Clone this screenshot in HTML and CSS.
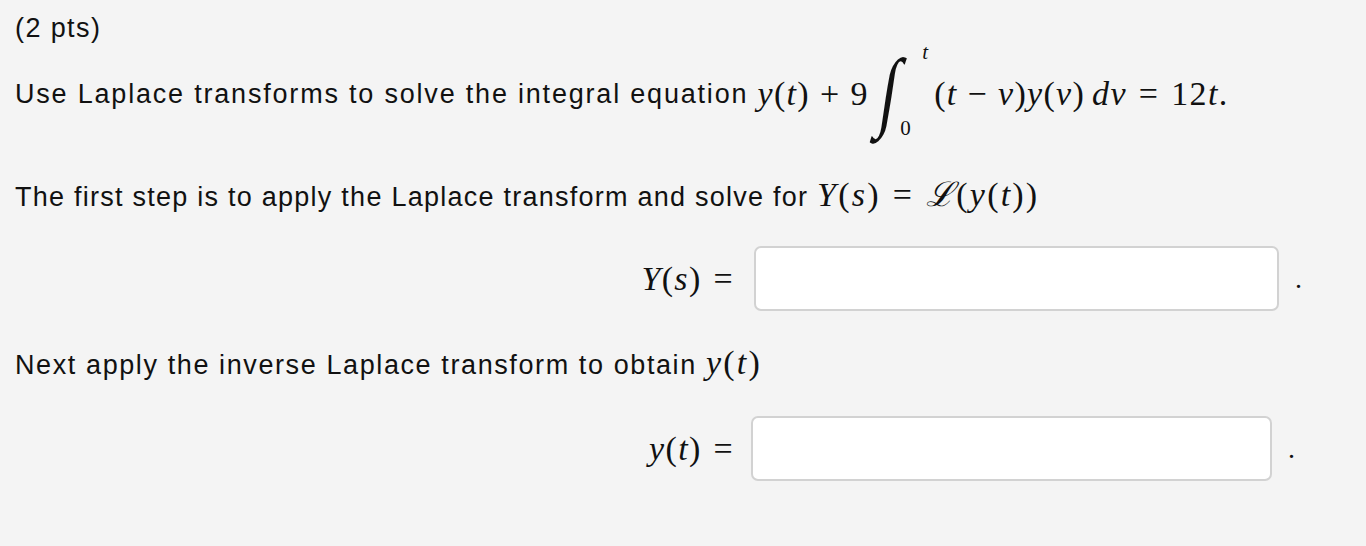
FILE: index.html
```html
<!DOCTYPE html>
<html>
<head>
<meta charset="utf-8">
<link rel="stylesheet" href="styles.css">
</head>
<body>
<div class="page">
  <p class="pts">(2 pts)</p>
  <p class="q1"><span class="txt">Use Laplace transforms to solve the integral equation </span><span class="m"><i>y</i>(<i>t</i>)<span class="op">+</span>9</span><span class="integral"><span class="isign">∫</span><span class="lims"><span class="up"><i>t</i></span><span class="lo">0</span></span></span><span class="m">(<i>t</i><span class="op">−</span><i>v</i>)<i>y</i>(<i>v</i>)<span class="sp"></span><i>dv</i><span class="rel">=</span>12<i>t</i>.</span></p>
  <p class="q2"><span class="txt">The first step is to apply the Laplace transform and solve for </span><span class="m wide"><i>Y</i>(<i>s</i>)<span class="rel">=</span><span class="cal">ℒ</span>(<i>y</i>(<i>t</i>))</span></p>
  <div class="row r1">
    <div class="lab m"><i>Y</i>(<i>s</i>)<span class="rel">=</span></div>
    <div class="box b1"></div>
    <span class="dot">.</span>
  </div>
  <p class="q3"><span class="txt">Next apply the inverse Laplace transform to obtain </span><span class="m wide"><i>y</i>(<i>t</i>)</span></p>
  <div class="row r2">
    <div class="lab m"><i>y</i>(<i>t</i>)<span class="rel">=</span></div>
    <div class="box b2"></div>
    <span class="dot">.</span>
  </div>
</div>
</body>
</html>
```
FILE: styles.css
```css
html, body {
  margin: 0;
  padding: 0;
  background: #f4f4f4;
}
body {
  font-family: "Liberation Sans", Arial, sans-serif;
  font-size: 27px;
  letter-spacing: 1.4px;
  color: #111;
}
.page {
  padding: 10px 0 0 15px;
}
p { margin: 0; }
.pts { line-height: 36px; height: 36px; }
.q1 {
  margin-top: 3px;
  height: 90px;
  display: flex;
  align-items: center;
  white-space: pre;
}
.q1 .txt { letter-spacing: 1.8px; }
.q2 .txt { letter-spacing: 1.25px; }
.q3 .txt { letter-spacing: 1.6px; }
.m {
  font-family: "Liberation Serif", "Times New Roman", serif;
  font-size: 34px;
  letter-spacing: 1.3px;
}
.m.wide { letter-spacing: 2.2px; }
.m i { font-style: italic; }
.op { margin: 0 10px; }
.rel { margin: 0 12px; }
.lab .rel { margin-right: 0; }
.sp { display: inline-block; width: 7px; }
.integral {
  display: inline-flex;
  align-items: center;
  margin: 0 6px 0 12px;
  font-family: "Liberation Serif", serif;
  letter-spacing: 0;
}
.isign {
  font-size: 64px;
  font-style: italic;
  line-height: 90px;
  display: inline-block;
  transform: translateY(-3px) scaleY(1.38) skewX(-12deg);
}
.lims {
  display: flex;
  flex-direction: column;
  justify-content: space-between;
  height: 88px;
  font-size: 21px;
  margin-left: 2px;
}
.lims .up { margin: -8px 0 0 22px; line-height: 20px; }
.lims .lo { margin-left: 0; line-height: 20px; }
.cal { font-style: italic; }
.q2 { margin-top: 38px; line-height: 36px; }
.row {
  display: flex;
  align-items: center;
  height: 65px;
}
.r1 { margin-top: 31px; }
.r2 { margin-top: 33px; }
.lab {
  width: 719px;
  text-align: right;
  flex: none;
}
.box {
  height: 61px;
  background: #fff;
  border: 2px solid #d2d2d2;
  border-radius: 7px;
  flex: none;
}
.b1 { margin-left: 20px; width: 521px; }
.b2 { margin-left: 17px; width: 517px; }
.dot {
  font-family: "Liberation Serif", serif;
  font-size: 28px;
  margin-left: 16px;
}
.q3 { margin-top: 34px; line-height: 36px; }
```
